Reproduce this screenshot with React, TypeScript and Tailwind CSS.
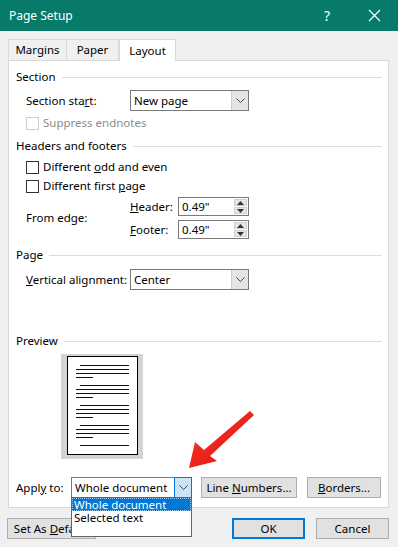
import React from "react";

const font = { fontFamily: '"Noto Sans", "Open Sans", Arial, sans-serif' };

function Chevron() {
  return (
    <svg width="9" height="5" viewBox="0 0 9 5">
      <polyline points="0.5,0.5 4.5,4.5 8.5,0.5" fill="none" stroke="#444" strokeWidth="1" />
    </svg>
  );
}

function Heading({ text }: { text: string }) {
  return (
    <div className="flex items-center h-[16px] pl-[7px] pr-[6px]">
      <span className="whitespace-nowrap">{text}</span>
      <div className="flex-1 h-px bg-[#dcdcdc] ml-[6px]" />
    </div>
  );
}

function Select({ value }: { value: string }) {
  return (
    <div className="flex h-[21px] w-[119px] border border-[#7a7a7a] bg-white">
      <div className="flex-1 flex items-center pl-[3px]">{value}</div>
      <div className="w-[17px] flex items-center justify-center bg-[#e5e5e5] border-l border-[#cfcfcf]">
        <Chevron />
      </div>
    </div>
  );
}

function Check({ label, disabled }: { label: React.ReactNode; disabled?: boolean }) {
  return (
    <div className="flex items-center h-[14px] pl-[17px]">
      <div
        className={
          disabled
            ? "w-[13px] h-[13px] border border-[#cccccc] bg-white"
            : "w-[13px] h-[13px] border border-[#333] bg-white"
        }
      />
      <span className={disabled ? "ml-[4px] whitespace-nowrap text-[#8c8c8c]" : "ml-[4px] whitespace-nowrap"}>{label}</span>
    </div>
  );
}

function Spin({ value }: { value: string }) {
  return (
    <div className="flex h-[19px] w-[71px] border border-[#7a7a7a] bg-white">
      <div className="flex-1 flex items-center pl-[3px]">{value}</div>
      <div className="w-[15px] flex flex-col gap-px p-px">
        <div className="flex-1 bg-[#e5e5e5] border border-[#cfcfcf] flex items-center justify-center">
          <svg width="7" height="4" viewBox="0 0 7 4">
            <polygon points="3.5,0 7,4 0,4" fill="#333" />
          </svg>
        </div>
        <div className="flex-1 bg-[#e5e5e5] border border-[#cfcfcf] flex items-center justify-center">
          <svg width="7" height="4" viewBox="0 0 7 4">
            <polygon points="0,0 7,0 3.5,4" fill="#333" />
          </svg>
        </div>
      </div>
    </div>
  );
}

function Button({ children, w, primary }: { children: React.ReactNode; w: string; primary?: boolean }) {
  return (
    <div
      className={
        (primary ? "border-2 border-[#0078d7] " : "border border-[#adadad] ") +
        "h-[21px] bg-[#e1e1e1] flex items-center justify-center " +
        w
      }
    >
      <span className="whitespace-nowrap">{children}</span>
    </div>
  );
}

function Preview() {
  const groups = [364, 384, 404, 424];
  return (
    <div className="ml-[52px] w-[82px] h-[105px] bg-[#d4d4d4] pt-[2px] pl-[6px]">
      <div className="w-[71px] h-[99px] bg-white border border-black">
        <svg width="69" height="97" viewBox="68 356 69 97">
          {groups.map((y) => (
            <g key={y} stroke="#111" strokeWidth="1">
              <line x1="80" x2="129" y1={y + 0.5} y2={y + 0.5} />
              <line x1="76" x2="129" y1={y + 4.5} y2={y + 4.5} />
              <line x1="76" x2="129" y1={y + 8.5} y2={y + 8.5} />
              <line x1="76" x2="93" y1={y + 12.5} y2={y + 12.5} />
            </g>
          ))}
          <line x1="80" x2="129" y1="444.5" y2="444.5" stroke="#111" strokeWidth="1" />
        </svg>
      </div>
    </div>
  );
}

export default function App() {
  return (
    <div className="relative w-[398px] h-[547px] bg-[#f0f0f0] overflow-hidden text-[11.5px] text-black" style={font}>
      <div className="h-[31px] bg-[#087a69] flex items-center pl-[9px] text-white text-[12px]">
        <span className="flex-1">Page Setup</span>
        <span className="mr-[38px] text-[14px]">?</span>
        <svg width="13" height="13" viewBox="0 0 13 13" className="mr-[17px]">
          <path d="M1 1 L12 12 M12 1 L1 12" stroke="white" strokeWidth="1.2" />
        </svg>
      </div>

      <div className="pt-[7px] px-[8px]">
        <div className="flex items-end h-[22px]">
          <div className="w-[59px] h-[21px] border border-[#d9d9d9] border-b-0 flex items-center justify-center">Margins</div>
          <div className="w-[52px] h-[21px] border-t border-r border-[#d9d9d9] flex items-center justify-center">Paper</div>
          <div className="w-[57px] h-[22px] -mb-px relative z-10 bg-white border border-[#d9d9d9] border-b-0 flex items-center justify-center">Layout</div>
        </div>

        <div className="w-[381px] h-[448px] border border-[#d9d9d9] bg-white">
          <div className="h-[8px]" />
          <Heading text="Section" />
          <div className="flex items-center mt-[5px] pl-[17px]">
            <span className="w-[104px] whitespace-nowrap">Section sta<span className="underline">r</span>t:</span>
            <Select value="New page" />
          </div>
          <div className="mt-[5px]">
            <Check label="Suppress endnotes" disabled />
          </div>

          <div className="mt-[8px]">
            <Heading text="Headers and footers" />
          </div>
          <div className="mt-[6px]">
            <Check label={<>Different <span className="underline">o</span>dd and even</>} />
          </div>
          <div className="mt-[5px]">
            <Check label={<>Different first <span className="underline">p</span>age</>} />
          </div>
          <div className="flex items-center mt-[4px] pl-[17px]">
            <span className="w-[104px] whitespace-nowrap">From edge:</span>
            <div className="flex flex-col gap-[4px]">
              <div className="flex items-center">
                <span className="w-[48px]"><span className="underline">H</span>eader:</span>
                <Spin value="0.49&quot;" />
              </div>
              <div className="flex items-center">
                <span className="w-[48px]"><span className="underline">F</span>ooter:</span>
                <Spin value="0.49&quot;" />
              </div>
            </div>
          </div>

          <div className="mt-[8px]">
            <Heading text="Page" />
          </div>
          <div className="flex items-center mt-[6px] pl-[17px]">
            <span className="w-[104px] whitespace-nowrap"><span className="underline">V</span>ertical alignment:</span>
            <Select value="Center" />
          </div>

          <div className="mt-[43px]">
            <Heading text="Preview" />
          </div>
          <div className="mt-[5px]">
            <Preview />
          </div>

          <div className="flex items-center mt-[18px] pl-[7px]">
            <span className="w-[55px] whitespace-nowrap">Appl<span className="underline">y</span> to:</span>
            <div className="flex h-[21px] w-[121px] border border-[#7a7a7a] bg-white">
              <div className="flex-1 flex items-center pl-[3px] whitespace-nowrap">Whole document</div>
              <div className="w-[18px] -m-px flex items-center justify-center bg-[#cce4f7] border border-[#0078d7]">
                <Chevron />
              </div>
            </div>
            <div className="ml-[9px]">
              <Button w="w-[96px]">Line <span className="underline">N</span>umbers...</Button>
            </div>
            <div className="ml-[10px]">
              <Button w="w-[74px]"><span className="underline">B</span>orders...</Button>
            </div>
          </div>
        </div>
      </div>

      <div className="flex items-center mt-[10px] pl-[7px]">
        <Button w="w-[89px]">Set As <span className="underline">D</span>efault</Button>
        <div className="ml-[136px]">
          <Button w="w-[73px]" primary>OK</Button>
        </div>
        <div className="ml-[11px]">
          <Button w="w-[73px]">Cancel</Button>
        </div>
      </div>

      <div className="absolute left-[71px] top-[497px] w-[121px] h-[40px] border border-[#646464] bg-white z-20">
        <div className="h-[13px] bg-[#0078d7] text-white flex items-center pl-[2px] outline outline-1 outline-dotted outline-[#9cc7ef] -outline-offset-1 whitespace-nowrap">
          Whole document
        </div>
        <div className="h-[13px] flex items-center pl-[2px] whitespace-nowrap">Selected text</div>
      </div>

      <svg className="absolute left-0 top-0 pointer-events-none z-30" width="398" height="547" viewBox="0 0 398 547">
        <defs>
          <linearGradient id="ar" x1="0" y1="0" x2="1" y2="1">
            <stop offset="0" stopColor="#ff3a2e" />
            <stop offset="1" stopColor="#d80e0a" />
          </linearGradient>
        </defs>
        <polygon points="189,468 195,442 204,450 250,411 254,415 210,456 217,461" fill="url(#ar)" />
      </svg>
    </div>
  );
}
